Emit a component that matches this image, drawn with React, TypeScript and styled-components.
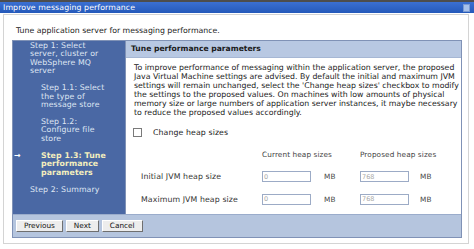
import styled, { createGlobalStyle } from 'styled-components'

const GlobalStyle = createGlobalStyle`
  html, body {
    margin: 0;
    padding: 0;
    background: #fff;
  }
  body {
    font-family: "DejaVu Sans", Verdana, sans-serif;
    font-size: 7.8px;
    letter-spacing: 0.1px;
    color: #222;
  }
`

const Window = styled.div`
  width: 474px;
  height: 249px;
  box-sizing: border-box;
  display: flex;
  flex-direction: column;
  overflow: hidden;
  background: #fff;
`

const TitleBar = styled.div`
  box-sizing: border-box;
  height: 13px;
  border-top: 2px solid #4d4d4d;
  background: linear-gradient(#3b70d2, #2559ba);
  color: #fff;
  display: flex;
  align-items: center;
  justify-content: space-between;
  padding: 0 4px 0 3px;
  line-height: 11px;
`

const TitleButton = styled.div`
  width: 5px;
  height: 6px;
  background: #a7c1ea;
  border: 1px solid #7a9ad2;
`

const Body = styled.div`
  flex: 1;
  box-sizing: border-box;
  padding: 1px 5px 5px 3px;
  display: flex;
`

const Panel = styled.div`
  flex: 1;
  box-sizing: border-box;
  border: 1px solid #d4d4d4;
  display: flex;
  flex-direction: column;
  padding: 0 6px 5px 8px;
`

const Intro = styled.div`
  height: 25px;
  box-sizing: border-box;
  padding: 11px 0 0 4px;
  line-height: 9px;
  letter-spacing: 0;
`

const Wizard = styled.div`
  flex: 1;
  display: grid;
  grid-template-columns: 112px 1fr;
  grid-template-rows: 1fr 23px;
  border: 1px solid #8092b6;
`

const Nav = styled.div`
  background: #4a68a4;
  padding: 1px 17px 0 0;
`

interface NavItemProps {
  $current?: boolean
}

const NavItem = styled.div<NavItemProps>`
  display: flex;
  line-height: 8.4px;
  margin-bottom: 8.6px;
  color: ${(p) => (p.$current ? '#f4efbe' : '#dfe6f3')};
  font-weight: ${(p) => (p.$current ? 'bold' : 'normal')};
`

const Marker = styled.div<{ $level: number }>`
  flex: none;
  width: ${(p) => (p.$level === 1 ? 17 : 28)}px;
  box-sizing: border-box;
  padding-left: 1px;
  color: #fff;
  font-weight: bold;
`

const NavText = styled.div`
  flex: 1;
`

const Content = styled.div`
  display: flex;
  flex-direction: column;
  background: #fff;
  border-left: 1px solid #8092b6;
  min-width: 0;
`

const Header = styled.div`
  height: 17px;
  box-sizing: border-box;
  background: #b8c8e2;
  border-bottom: 1px solid #a6b7d4;
  padding-left: 5px;
  font-size: 7.6px;
  letter-spacing: 0;
  font-weight: bold;
  line-height: 16px;
  color: #1a1a1a;
`

const Main = styled.div`
  padding: 5px 1px 0 8px;
`

const Para = styled.p`
  margin: 0;
  line-height: 9px;
  letter-spacing: 0;
  color: #222;
`

const Line = styled.span`
  display: block;
  white-space: nowrap;
`

const CheckRow = styled.label`
  display: flex;
  align-items: center;
  margin-top: 11px;
  margin-left: -1px;
  line-height: 9px;
`

const Box = styled.span`
  width: 7px;
  height: 7px;
  border: 1px solid #7a7a7a;
  background: #fff;
  margin-right: 11px;
`

const HeapGrid = styled.div`
  display: grid;
  grid-template-columns: 121px 62px 36px 60px auto;
  grid-auto-rows: 22.5px;
  align-items: center;
  margin-top: 6px;
  margin-left: 7px;
`

const ColHead = styled.div`
  color: #444;
  font-size: 7.3px;
`

const RowLabel = styled.div`
  color: #333;
`

const Unit = styled.div`
  color: #444;
  font-size: 7.3px;
`

const HeapInput = styled.input`
  box-sizing: border-box;
  width: 49px;
  height: 11px;
  border: 1px solid #9cabc6;
  background: #fff;
  color: #aaa;
  font-family: "DejaVu Sans", Verdana, sans-serif;
  font-size: 6.5px;
  padding: 0 1px;
  margin: 0;
`

const Footer = styled.div`
  grid-column: 1 / -1;
  background: #b5c5de;
  border-top: 1px solid #9aaccb;
  display: flex;
  align-items: center;
  gap: 3px;
  padding-left: 3px;
`

const Button = styled.button`
  height: 12px;
  box-sizing: border-box;
  padding: 0 7px;
  border: 1px solid;
  border-color: #fff #6f6f6f #6f6f6f #fff;
  background: #ededed;
  color: #111;
  font-family: "DejaVu Sans", Verdana, sans-serif;
  font-size: 7.3px;
  line-height: 10px;
`

const steps = [
  { level: 1, text: 'Step 1: Select server, cluster or WebSphere MQ server' },
  { level: 2, text: 'Step 1.1: Select the type of message store' },
  { level: 2, text: 'Step 1.2: Configure file store' },
  { level: 2, text: 'Step 1.3: Tune performance parameters', current: true },
  { level: 1, text: 'Step 2: Summary' },
]

const paragraph = [
  'To improve performance of messaging within the application server, the proposed',
  'Java Virtual Machine settings are advised. By default the initial and maximum JVM',
  "settings will remain unchanged, select the 'Change heap sizes' checkbox to modify",
  'the settings to the proposed values. On machines with low amounts of physical',
  'memory size or large numbers of application server instances, it maybe necessary',
  'to reduce the proposed values accordingly.',
]

const heapRows = ['Initial JVM heap size', 'Maximum JVM heap size']

export default function App() {
  return (
    <Window>
      <GlobalStyle />
      <TitleBar>
        <span>Improve messaging performance</span>
        <TitleButton />
      </TitleBar>
      <Body>
        <Panel>
          <Intro>Tune application server for messaging performance.</Intro>
          <Wizard>
            <Nav>
              {steps.map((s) => (
                <NavItem key={s.text} $current={s.current}>
                  <Marker $level={s.level}>{s.current ? '→' : ''}</Marker>
                  <NavText>{s.text}</NavText>
                </NavItem>
              ))}
            </Nav>
            <Content>
              <Header>Tune performance parameters</Header>
              <Main>
                <Para>
                  {paragraph.map((line) => (
                    <Line key={line}>{line}</Line>
                  ))}
                </Para>
                <CheckRow>
                  <Box />
                  Change heap sizes
                </CheckRow>
                <HeapGrid>
                  <div />
                  <ColHead style={{ gridColumn: '2 / 4' }}>Current heap sizes</ColHead>
                  <ColHead style={{ gridColumn: '4 / 6' }}>Proposed heap sizes</ColHead>
                  {heapRows.map((label) => (
                    <>
                      <RowLabel key={label}>{label}</RowLabel>
                      <HeapInput readOnly value="0" />
                      <Unit>MB</Unit>
                      <HeapInput readOnly value="768" />
                      <Unit>MB</Unit>
                    </>
                  ))}
                </HeapGrid>
              </Main>
            </Content>
            <Footer>
              <Button>Previous</Button>
              <Button>Next</Button>
              <Button>Cancel</Button>
            </Footer>
          </Wizard>
        </Panel>
      </Body>
    </Window>
  )
}
